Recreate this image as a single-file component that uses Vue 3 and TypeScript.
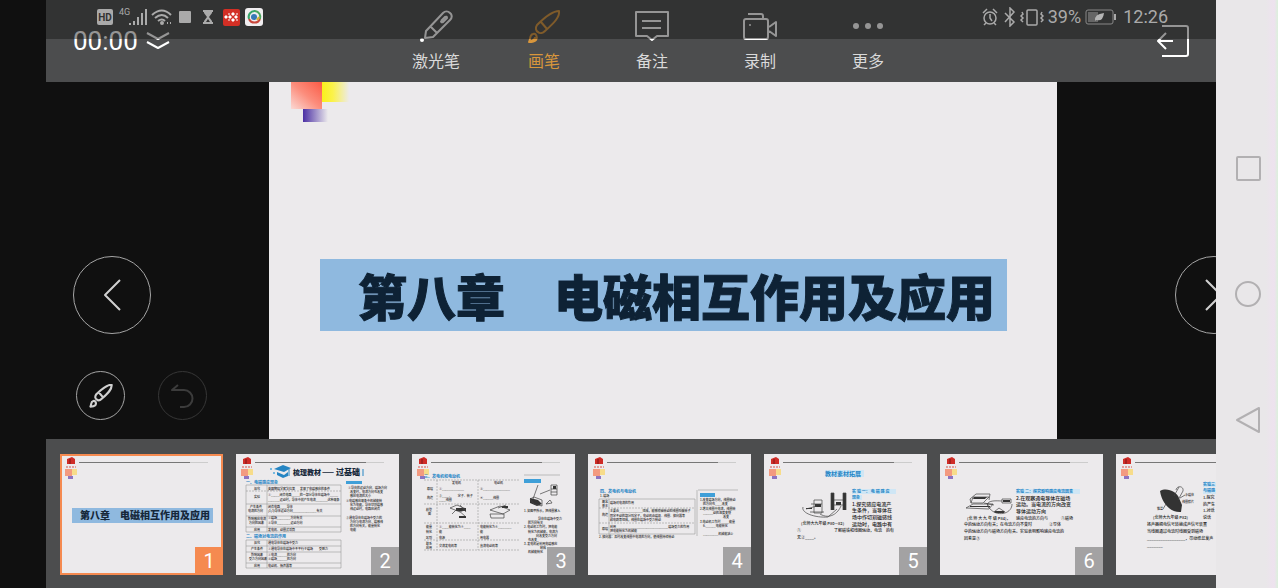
<script setup lang="ts">
import { ref } from 'vue'

type Kind = 'ink' | 'blue' | 'head'
type Text = [x: number, y: number, size: number, text: string, kind?: Kind]
type Box = [x: number, y: number, w: number, h: number]

interface Slide {
  id: number
  texts: Text[]
  solid?: string
  dashed?: string
  marks?: Box[]
  tags?: Box[]
  art?: string
  shade?: string
}

const tools = [
  { id: 'laser', label: '激光笔' },
  { id: 'brush', label: '画笔' },
  { id: 'note', label: '备注' },
  { id: 'record', label: '录制' },
  { id: 'more', label: '更多' },
]
const activeTool = ref('brush')
const current = ref(1)

const slides: Slide[] = [
  { id: 1, texts: [[20, 65, 10, '第八章　电磁相互作用及应用', 'head']], marks: [[12, 54, 141, 15]] },
  {
    id: 2,
    texts: [
      [57, 21, 7, '梳理教材', 'head'], [86, 21, 7, '——', 'head'], [100, 21, 8, '过基础', 'head'],
      [10, 30, 4, '一、电磁感应现象', 'blue'],
      [18, 36, 3, '探究'], [32, 36, 3, '英国物理学家法拉第'], [64, 36, 3, '发现了电磁感应的条件'],
      [18, 44, 3, '实验'], [32, 42, 3, '①_____闭合电路_____的一部分导体在磁场中_____'],
      [32, 47, 3, '_______运动时，导体中就产生电流_______这种现象'],
      [14, 54, 3, '产生条件'], [32, 54, 3, '闭合电路____导体'],
      [12, 58, 3, '电流的方向'], [32, 58, 3, '(1)与导体运动方向______________有关'],
      [12, 66, 3, '影响感应电流'], [32, 65, 3, '①磁场________方向有关'],
      [13, 70, 3, '方向的因素'], [32, 70, 3, '②导体________运动方向'],
      [18, 77, 3, '应用'], [32, 77, 3, '发电机、动圈式话筒'],
      [10, 84, 4, '二、磁场对电流的作用', 'blue'],
      [18, 90, 3, '探究'], [32, 90, 3, '通电导体在磁场中受力'],
      [15, 96, 3, '产生条件'], [32, 96, 3, '①通电导体在磁场中不平行于磁场　　受到力'],
      [15, 102, 3, '影响因素'], [32, 102, 3, '①电流______的方向'],
      [13, 106, 3, '受力方向因素'], [32, 106, 3, '②磁场______的方向'],
      [18, 113, 3, '应用'], [32, 113, 3, '电动机、扬声器等'],
      [112, 35, 3, '①导体的运动方向、磁场方向'], [114, 39, 3, '改变时，电流方向也改变'], [114, 43, 3, '感应电流的大小'],
      [110, 48, 3, '②电磁感应现象中机械能转'], [114, 52, 3, '化为电能，导体切割磁感'], [114, 56, 3, '线运动时，电路应闭合'],
      [110, 65, 3, '③通电导体在磁场中受力的'], [114, 69, 3, '方向与电流方向、磁感线'], [114, 73, 3, '的方向有关，能量转化'], [114, 77, 3, '电能'],
    ],
    solid: 'M10 31H105V78H10ZM31 31V78M10 86H105V114H10ZM31 86V114M10 50H105M10 62H105M10 73H105M10 92H105M10 98H105M10 109H105',
    dashed: 'M10 37H105',
    tags: [[110, 27, 16, 3]],
  },
  {
    id: 3,
    texts: [
      [12, 24, 4, '三、发电机和电动机', 'blue'],
      [40, 30, 3, '发电机'], [82, 30, 3, '电动机'],
      [15, 36, 3, '原理'], [27, 36, 3, '①_____________'], [68, 36, 3, '②________________'],
      [15, 45, 3, '构造'], [27, 43, 3, '③____、　　定子、转子'], [27, 47, 3, '____线圈'], [68, 45, 3, '④______线圈'],
      [14, 57, 3, '模型'], [16, 61, 3, '图'],
      [14, 74, 3, '能量'], [27, 74, 3, '①____能转化为⑤____'], [68, 74, 3, '电能转化为⑥________'],
      [14, 79, 3, '转化'], [27, 79, 3, '能'], [68, 79, 3, '能'],
      [14, 85, 3, '区别'], [27, 85, 3, '电源'], [68, 85, 3, '用电器'],
      [14, 91, 3, '联系'], [14, 95, 3, '应用'], [27, 93, 3, '交流发电机等'], [68, 93, 3, '直流电动机等'],
      [112, 58, 3, '1. 如图甲所示，把线圈放入'], [116, 66, 3, '______导体在磁场中受力'], [116, 70, 3, '的方向有关'],
      [112, 74, 3, '2. 电动机工作时，把电能'], [116, 79, 3, '转化为机械能，电流方'], [124, 83, 3, '向改变受力方向'], [116, 87, 3, '也改变'],
      [112, 91, 3, '3. 发电机是利用电磁感应'], [128, 95, 3, '制成'], [116, 99, 3, '机械能转化'],
    ],
    dashed: 'M12 26H108M25 26V96M66 26V96M12 50H108M12 69H108M12 86H108M12 96H108',
    solid: 'M112 21H148',
    tags: [[112, 25, 17, 4]],
    art: 'M38 54l7-3 9 4-6 3zM40 60l5-5 9 8M48 51l6 7M78 56l10-4 10 4-7 4zM78 60h14v4H79zM86 54l8-3M126 31l-5 14M139 31h6v10h-6zM139 35h6M139 38h6M128 40l10-4M118 45l4-2 8 3v6l-8-2zM134 50l4-4 2 3z',
    shade: 'M44 54h10v3H44zM47 62h7v2h-7zM90 52h6v2h-6zM118 44l8 2 4 4-5 2-7-3zM141 32h3v3h-3z',
  },
  {
    id: 4,
    texts: [
      [12, 39, 4, '四、发电机与电动机', 'blue'], [12, 43, 3, '1. 磁场'],
      [14, 49, 3, '概念'], [14, 53, 3, '基本'], [22, 50, 3, '磁场对电流的作用'],
      [14, 62, 3, '构造'], [22, 58, 3, '主要由______________组成，能够绕轴转动的线圈叫做转子'],
      [22, 63, 3, '固定不动的部分叫定子，电动机由磁极、线圈、换向器等'], [22, 67, 3, '和电刷等组成，线圈在磁场中受力转动'],
      [14, 76, 3, '原理'], [22, 74, 3, '利用_______________________________磁场受力的作用'], [22, 78, 3, '把电能转化为机械能'],
      [11, 84, 3, '2. 换向器：及时改变线圈中电流的方向，使线圈持续转动'],
      [112, 47, 3, '1.改变磁场方向，线圈转动'], [115, 51, 3, '的方向也____改变'],
      [112, 56, 3, '2.增大线圈中电流，线圈转'], [115, 60, 3, '______动的速度变快'], [135, 64, 3, '改变'],
      [112, 69, 3, '3.电动机工作时_____能量'], [115, 73, 3, '6.______电能转化'], [115, 81, 3, '_________机械能减少'],
    ],
    solid: 'M11 45H107V80H11ZM21 45V80M110 36H150M109 36V82',
    dashed: 'M11 54H107M11 69H107',
    tags: [[112, 39, 15, 4]],
  },
  {
    id: 5,
    texts: [
      [61, 22, 6, '教材素材拓展', 'blue'],
      [88, 39, 4, '实 验 一： 电 磁 感 应', 'blue'], [88, 45, 4, '现象', 'blue'],
      [88, 52, 5, '1.探究感应电流产'], [88, 58, 5, '生条件，当导体在'], [88, 65, 5, '场中作切割磁感线'], [88, 72, 5, '运动时，电路中有'],
      [37, 71, 4, '(北师大九年级 P80—82)'],
      [33, 78, 4, '①'], [70, 78, 4, '了解磁铁和线圈运动，电流　的有'],
      [33, 85, 4, '无②____。'],
    ],
    marks: [[61, 16, 39, 7], [88, 35, 44, 5], [88, 41, 10, 5]],
    art: 'M67 39V56M70 39V56M79 39V56M82 39V56M67 39H70M79 39H82M70 46H79M70 51H79M50 46h8v13h-8zM47 50h11M42 55l11-3M46 58h14M56 60c10 6 18-1 21-8M39 53c-2 6 12 11 25 10l9-8',
    shade: 'M67 39h3v17h-3zM79 39h3v17h-3zM72 48h5v3h-5zM51 50h6v3h-6zM42 54h6v1h-6z',
  },
  {
    id: 6,
    texts: [
      [76, 39, 4, '实验 二：探究影响感应电流因素', 'blue'],
      [76, 46, 5, '2.在观察通电导体在磁场'], [76, 52, 5, '运动。当电流的方向改变'], [76, 59, 5, '导体运动方向'],
      [27, 66, 4, '(北 师 大 九 年 级 P84)，'], [76, 66, 4, '感应电流的方向与　　　 ①磁场'],
      [24, 72, 4, '中的运动方向有关；在电流方向不变时　　　　 ②导体'],
      [24, 79, 4, '中的运动方向与磁场方向有关。实验表明影响感应电流的'], [24, 86, 4, '因素是③'],
    ],
    marks: [[76, 35, 64, 5]],
    art: 'M33 43h16l-6 6H31zM31 49l-1-4 6-5h14l-1 6M26 54l7-4h20l-4 5zM49 54c-6-9 10-7 13-7M47 49c4 15 25 13 25 1M62 45h9v4h-9zM54 58l5-4 6 4zM44 49l10 2',
    shade: 'M34 43h13l-2 2H33zM63 46h7v2h-7zM55 57h9v2h-9zM30 52h20v1H30z',
  },
  {
    id: 7,
    texts: [
      [87, 32, 4, '实验三', 'blue'], [87, 38, 4, '与磁感', 'blue'],
      [87, 45, 4, '1.探究'], [87, 52, 4, '的产生'], [87, 58, 4, '1.对话'], [87, 65, 4, '说话'],
      [69, 42, 3, '永磁体'], [66, 49, 3, '线圈膜片'], [41, 56, 3, '锥盆'],
      [37, 65, 4, '(北师大九年级 P82)'],
      [31, 72, 4, '扬声器把电信号转换成声信号装置'], [31, 79, 4, '当线圈通过电流时线圈受到磁场'],
      [31, 86, 4, '_________________，带动纸盆发声'], [31, 93, 4, '_______'],
    ],
    marks: [[87, 28, 40, 5], [87, 35, 18, 5]],
    art: 'M60 36c1-5 8-4 7 1l-5 9M58 42l5-9M64 44l5-3M50 50l-3 5',
    shade: 'M44 37C51 33 61 38 63 44L66 51 65 58C55 59 46 50 44 37Z',
  },
]
</script>

<template>
  <div class="page">
    <main class="screen">
      <header class="topbar">
        <div class="timer">
          <span>00:00</span>
          <button class="plain" aria-label="收起工具栏">
            <svg width="24" height="20" viewBox="0 0 24 20"><path d="M1 2l11 6 11-6M1 11l11 6 11-6" class="stroke" /></svg>
          </button>
        </div>
        <nav class="tools">
          <button v-for="t in tools" :key="t.id" class="tool" :class="{ active: activeTool === t.id }" @click="activeTool = t.id">
            <svg width="34" height="34" viewBox="0 0 34 34" class="stroke">
              <template v-if="t.id === 'laser'">
                <path d="M6 28L7 21 24 3a5 5 0 0 1 7 0l1 1a5 5 0 0 1-1 6L14 27ZM11 16l7 7M22 11l4-4q2-1 2 1l-4 4q-2 1-2-1" />
                <circle cx="3" cy="30" r="2" class="fill nostroke" />
              </template>
              <template v-else-if="t.id === 'brush'">
                <path d="M32 1C26 1 19 6 10 15 8 18 9 21 11 22 13 24 16 23 18 21 27 13 33 7 32 1ZM14 12l6 7" />
                <path d="M2 32C4 29 2 25 6 24 9 23 11 27 9 30 7 32 4 32 2 32ZM4 31q4-1 4-4" />
              </template>
              <path v-else-if="t.id === 'note'" d="M1 2H33V26H22L17 30 12 26H1ZM7 11H26M7 18H26" />
              <template v-else-if="t.id === 'record'">
                <path d="M3 9H23a2 2 0 0 1 2 2V27a2 2 0 0 1-2 2H3a2 2 0 0 1-2-2V11a2 2 0 0 1 2-2ZM5 4H18q2 0 2 2V9M26 17l7-5V26l-7-5" />
                <circle cx="7" cy="15" r="1" class="fill nostroke" />
              </template>
              <g v-else class="fill nostroke">
                <circle cx="5" cy="16" r="3" /><circle cx="17" cy="16" r="3" /><circle cx="29" cy="16" r="3" />
              </g>
            </svg>
            <span>{{ t.label }}</span>
          </button>
        </nav>
        <button class="plain exit" aria-label="退出">
          <svg width="32" height="32" viewBox="0 0 32 32"><path d="M5 1H29q2 0 2 2V29q0 2-2 2H5M16 16H1M9 8L1 16l8 8" class="stroke" /></svg>
        </button>
      </header>

      <div class="status">
        <div class="cluster left">
          <svg width="168" height="20" viewBox="0 0 168 20">
            <rect x="0" y="2" width="16" height="16" rx="2" fill="#aaa" />
            <text x="8" y="14" class="hd">HD</text>
            <text x="22" y="8" class="gen">4G</text>
            <path d="M33 18v-2M37 18v-4M41 18v-8M45 18V6M49 18V2" class="bars" />
            <g class="line">
              <path d="M55 8q10-9 19 0M58 11q7-6 13 0M61 14q4-3 7 0" />
            </g>
            <circle cx="65" cy="16" r="2" fill="#aaa" /><path d="M70 16h1M73 16h1" class="line" />
            <rect x="82" y="4" width="12" height="12" rx="1" fill="#aaa" />
            <path d="M106 4h10M106 16h10" class="line" /><path d="M107 4h8v2l-3 4 3 4v2h-8v-2l3-4-3-4z" fill="#aaa" /><path d="M109 15l2-3 2 3z" fill="#333" />
            <rect x="126" y="2" width="17" height="17" rx="2" fill="#d32f25" />
            <path d="M127 10l2-2 2 2-2 2zM131 10l2-2 2 2-2 2zM134 7l2-2 2 2-2 2zM134 13l2-2 2 2-2 2zM131 7l1-1 1 1-1 1zM131 13l1-1 1 1-1 1zM137 10l2-2 2 2-2 2zM139 7l1-1 1 1-1 1zM139 13l1-1 1 1-1 1z" fill="#fff" />
            <rect x="148" y="1" width="18" height="18" rx="3" fill="#f0eef0" />
            <path d="M152 12a6 6 0 0 1 6-8" stroke="#36a56a" stroke-width="2" fill="none" />
            <path d="M158 4a6 6 0 0 1 5 8" stroke="#4aa55c" stroke-width="2" fill="none" />
            <path d="M163 12a6 6 0 0 1-11 0" stroke="#c8463b" stroke-width="2" fill="none" />
            <circle cx="157" cy="10" r="3" fill="#3879b5" /><path d="M160 13l2-3" stroke="#d7b22e" stroke-width="2" />
          </svg>
        </div>
        <div class="cluster right">
          <svg width="62" height="20" viewBox="0 0 62 20" class="line">
            <circle cx="8" cy="11" r="6" /><path d="M8 7v4l2 3M1 6l4-4M11 2l4 4M4 16l-2 2M12 16l2 2" />
            <path d="M23 6l9 9-4 4V1l4 4-9 10" />
            <rect x="45" y="3" width="10" height="15" rx="1" /><path d="M40 5l1 2-2 2 2 2-2 2 2 2M60 5l-1 2 2 2-2 2 2 2-2 2" />
          </svg>
          <span>39%</span>
          <svg width="32" height="16" viewBox="0 0 32 16">
            <rect x="1" y="1" width="27" height="14" rx="2" fill="none" stroke="#888" /><rect x="3" y="3" width="10" height="10" fill="#666" />
            <path d="M30 5v6" stroke="#aaa" stroke-width="2" /><path d="M10 12q-1-7 9-8-1 9-8 7z" fill="#b5b5b5" />
          </svg>
          <time>12:26</time>
        </div>
      </div>

      <section class="stage">
        <div class="side">
          <button class="round big" aria-label="上一页">
            <svg width="40" height="40" viewBox="0 0 40 40"><path d="M28 5L13 20l15 15" class="stroke" /></svg>
          </button>
          <div class="pair">
            <button class="round small" aria-label="画笔">
              <svg width="24" height="24" viewBox="0 0 34 34" class="stroke thick"><path d="M32 1C26 1 19 6 10 15 8 18 9 21 11 22 13 24 16 23 18 21 27 13 33 7 32 1ZM14 12l6 7M2 32C4 29 2 25 6 24 9 23 11 27 9 30 7 32 4 32 2 32Z" /></svg>
            </button>
            <button class="round small off" aria-label="撤销" disabled>
              <svg width="26" height="26" viewBox="0 0 26 26" class="stroke"><path d="M8 2L2 7H14a8 8 0 0 1 0 17H10" /></svg>
            </button>
          </div>
        </div>
        <article class="slide">
          <svg class="mark" width="60" height="40" viewBox="0 0 60 40">
            <defs>
              <linearGradient id="r" x1="0" x2="1" y1="1" y2="0"><stop offset="0" stop-color="#fbd9d4" /><stop offset=".5" stop-color="#fc8d7c" /><stop offset="1" stop-color="#fb5a45" /></linearGradient>
              <linearGradient id="y"><stop offset="0" stop-color="#faf01c" /><stop offset=".4" stop-color="#fbf24a" /><stop offset="1" stop-color="#eceaea" /></linearGradient>
              <linearGradient id="p"><stop offset="0" stop-color="#4b2fa4" /><stop offset="1" stop-color="#eceaec" /></linearGradient>
            </defs>
            <rect x="31" width="27" height="20" fill="url(#y)" /><rect width="31" height="27" fill="url(#r)" /><rect x="12" y="27" width="25" height="13" fill="url(#p)" />
          </svg>
          <h1>第八章　电磁相互作用及应用</h1>
        </article>
        <div class="side next">
          <button class="round big" aria-label="下一页">
            <svg width="40" height="40" viewBox="0 0 40 40"><path d="M12 5l15 15-15 15" class="stroke" /></svg>
          </button>
        </div>
      </section>

      <footer class="strip">
        <button v-for="s in slides" :key="s.id" class="thumb" :class="{ on: current === s.id }" @click="current = s.id">
          <svg width="163" height="121" viewBox="0 0 163 121">
            <path d="M7 10V5l5-2 3 2v5z" fill="#cf2c27" /><path d="M10 5v5" stroke="#7d1719" /><path d="M6 13h10" stroke="#d9534c" stroke-dasharray="2 1" />
            <rect x="5" y="15" width="7" height="7" fill="#f39a80" /><rect x="12" y="15" width="5" height="6" fill="#f7dc8a" /><rect x="8" y="22" width="5" height="3" fill="#8e74c0" />
            <path d="M19 8.5H130" stroke="#777" /><path d="M130 8.5H148" stroke="#ccc" />
            <rect v-for="(m, i) in s.marks" :key="'m' + i" :x="m[0]" :y="m[1]" :width="m[2]" :height="m[3]" :class="s.id === 1 ? 'band' : 'hl'" />
            <rect v-for="(m, i) in s.tags" :key="'t' + i" :x="m[0]" :y="m[1]" :width="m[2]" :height="m[3]" fill="#3f9fd8" />
            <g v-if="s.id === 2">
              <path d="M38 15l9-4 8 3-7 4zM41 18l7 3 4-3v4l-5 2-6-3z" fill="#2585c3" /><path d="M53 15v7" stroke="#2585c3" />
              <circle cx="35" cy="15" r="1" fill="#51a9dd" /><circle cx="38" cy="19" r="1" fill="#51a9dd" /><path d="M127 15v7" stroke="#2585c3" />
            </g>
            <path v-if="s.solid" :d="s.solid" class="rule" />
            <path v-if="s.dashed" :d="s.dashed" class="rule dash" />
            <path v-if="s.shade" :d="s.shade" fill="#333" />
            <path v-if="s.art" :d="s.art" class="art" />
            <text v-for="(t, i) in s.texts" :key="i" :x="t[0]" :y="t[1]" :font-size="t[2]" :class="t[4] ?? 'ink'">{{ t[3] }}</text>
          </svg>
          <span v-if="s.id < 7" class="badge">{{ s.id }}</span>
        </button>
      </footer>
    </main>

    <nav class="keys">
      <button class="plain" aria-label="最近任务"><svg width="28" height="28" viewBox="0 0 28 28"><rect x="3" y="3" width="23" height="23" rx="1" /></svg></button>
      <button class="plain" aria-label="主屏幕"><svg width="28" height="28" viewBox="0 0 28 28"><circle cx="14" cy="14" r="12" /></svg></button>
      <button class="plain" aria-label="返回"><svg width="28" height="28" viewBox="0 0 28 28"><path d="M3 14L25 2V26Z" /></svg></button>
    </nav>
  </div>
</template>

<style>
body { margin: 0; background: #101010; }
</style>

<style scoped>
* { box-sizing: border-box; }
.page {
  display: flex;
  min-height: 100vh;
  padding-left: 46px;
  background: #101010;
  font-family: Roboto, "Noto Sans CJK SC", sans-serif;
}
button { margin: 0; padding: 0; border: 0; background: none; color: inherit; font: inherit; cursor: pointer; }
.plain { display: block; line-height: 0; }
svg { display: block; }
.stroke { fill: none; stroke: currentColor; stroke-width: 2; stroke-linejoin: round; }
.thick { stroke-width: 3; }
.fill { fill: currentColor; }
.nostroke { stroke: none; }

.screen { position: relative; display: flex; flex-direction: column; flex: 1; min-width: 0; overflow: hidden; }
.topbar {
  display: grid;
  grid-template-columns: 1fr auto 1fr;
  margin-right: -42px;
  padding: 0 27px;
  background: #4c4d4e;
  color: #fff;
}
.timer { display: flex; align-items: center; align-self: center; gap: 8px; font-size: 26px; line-height: 32px; }
.tools { display: flex; }
.tool { display: flex; flex-direction: column; align-items: center; width: 108px; padding: 10px 0 13px; }
.tool span { margin-top: 7px; font-size: 16px; line-height: 18px; color: #dadada; font-family: "Noto Sans CJK SC", sans-serif; }
.tool.active, .tool.active span { color: #d8963c; }
.exit { justify-self: end; align-self: center; margin-right: 42px; }

.status {
  position: absolute;
  inset: 0 0 auto;
  display: flex;
  justify-content: space-between;
  height: 39px;
  padding: 0 48px 6px 51px;
  background: rgba(20, 20, 20, .45);
  color: #aaa;
  pointer-events: none;
}
.cluster { display: flex; align-items: center; font-size: 18px; }
.right { gap: 4px; }
.right time { margin-left: 2px; }
.hd { font: 700 10px Roboto, sans-serif; fill: #333; text-anchor: middle; }
.gen { font: 9px Roboto, sans-serif; fill: #aaa; }
.line { fill: none; stroke: #aaa; stroke-width: 2; }
.right .line { stroke-width: 1.5; }
.bars { stroke: #aaa; stroke-width: 2; }

.stage { display: flex; flex: 1; margin-right: -64px; background: #101010; color: #d0d0d0; }
.side { display: flex; flex-direction: column; justify-content: flex-end; gap: 37px; width: 223px; padding: 0 27px 19px; }
.next { align-items: flex-end; padding-bottom: 105px; }
.pair { display: flex; gap: 33px; padding-left: 3px; }
.round { display: flex; align-items: center; justify-content: center; flex: none; border: 1px solid #a5a5a5; border-radius: 50%; }
.big { width: 78px; height: 78px; }
.small { width: 49px; height: 49px; }
.off { border-color: #363636; color: #3c3c3c; }
.slide { flex: 1; min-height: 357px; padding: 0 50px 0 51px; background: #eceaec; }
.mark { margin-left: -29px; }
h1 {
  margin: 137px 0 0;
  padding-left: 38px;
  background: #8fb9df;
  color: #0e2235;
  font: 900 49px/72px "Noto Sans CJK SC", sans-serif;
  white-space: nowrap;
  -webkit-text-stroke: 1px #0e2235;
}

.strip { display: flex; gap: 13px; padding: 15px 0 13px 14px; background: #4c4d4e; }
.thumb { position: relative; flex: none; background: #eceaec; }
.on::after { content: ""; position: absolute; inset: 0; border: 2px solid #f58a50; }
.badge {
  position: absolute;
  right: 0;
  bottom: 0;
  width: 28px;
  height: 28px;
  background: #a3a2a3;
  color: #fff;
  font-size: 20px;
  line-height: 28px;
  text-align: center;
}
.on .badge { z-index: 1; background: #f58a50; }
.thumb text { font-family: "Noto Sans CJK SC", sans-serif; white-space: pre; }
.ink { fill: #222; font-weight: 500; }
.blue { fill: #1c83c4; font-weight: 700; }
.head { fill: #16283a; font-weight: 900; }
.band { fill: #8fb9df; }
.hl { fill: #cfe6f5; }
.rule { fill: none; stroke: #888; stroke-width: .5; }
.dash { stroke-dasharray: 2 1; }
.art { fill: none; stroke: #444; stroke-width: .7; }

.keys {
  display: flex;
  flex-direction: column;
  align-items: center;
  justify-content: center;
  gap: 98px;
  width: 62px;
  padding-left: 2px;
  background: linear-gradient(90deg, #e9e7e9 80%, #eee2ef 94%, #dcf0dc);
}
.keys svg { fill: none; stroke: #b2b0b2; stroke-width: 2; stroke-linejoin: round; }
</style>
